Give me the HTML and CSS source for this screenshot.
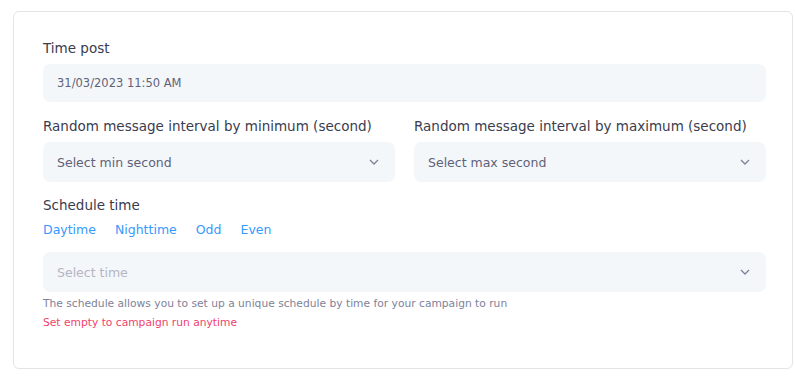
FILE: index.html
```html
<!DOCTYPE html>
<html lang="en">

<head>
    <meta charset="UTF-8">
    <meta name="viewport" content="width=device-width, initial-scale=1.0">
    <title>Campaign schedule</title>
    <link rel="stylesheet" href="styles.css">
</head>

<body>
    <div class="card">
        <div class="field">
            <label for="timePost">Time post</label>
            <input type="text" id="timePost" value="31/03/2023 11:50 AM">
        </div>
        <div class="row">
            <div class="field">
                <label for="minSecond">Random message interval by minimum (second)</label>
                <div class="selectWrap">
                    <select id="minSecond">
                        <option>Select min second</option>
                    </select>
                    <svg class="chevron" viewBox="0 0 10 6" width="10" height="6">
                        <path d="M1 1l4 4 4-4" fill="none" stroke="currentColor" stroke-width="1.3" />
                    </svg>
                </div>
            </div>
            <div class="field">
                <label for="maxSecond">Random message interval by maximum (second)</label>
                <div class="selectWrap">
                    <select id="maxSecond">
                        <option>Select max second</option>
                    </select>
                    <svg class="chevron" viewBox="0 0 10 6" width="10" height="6">
                        <path d="M1 1l4 4 4-4" fill="none" stroke="currentColor" stroke-width="1.3" />
                    </svg>
                </div>
            </div>
        </div>
        <div class="field">
            <label for="scheduleTime">Schedule time</label>
            <div class="presets">
                <a href="#">Daytime</a>
                <a href="#">Nighttime</a>
                <a href="#">Odd</a>
                <a href="#">Even</a>
            </div>
            <div class="selectWrap">
                <select id="scheduleTime" class="empty">
                    <option>Select time</option>
                </select>
                <svg class="chevron" viewBox="0 0 10 6" width="10" height="6">
                    <path d="M1 1l4 4 4-4" fill="none" stroke="currentColor" stroke-width="1.3" />
                </svg>
            </div>
            <div class="hint first">The schedule allows you to set up a unique schedule by time for your campaign to run</div>
            <div class="hint danger">Set empty to campaign run anytime</div>
        </div>
    </div>
</body>

</html>
```

FILE: styles.css
```css
:root {
    --background: #ffffff;
    --border: #e4e4e7;
    --label: #3a3c4e;
    --text: #5e6278;
    --muted: #b5b5c3;
    --hint: #7e8299;
    --input: #f4f7fa;
    --primary: #3699ff;
    --danger: #f1416c;
    --font: "DejaVu Sans", sans-serif;
}

body {
    margin: 0;
    padding: 11px 2px 7px 13px;
    background-color: var(--background);
    font-family: var(--font);
}

.card {
    border: 1px solid var(--border);
    border-radius: 6px;
    padding: 26px 26px 36px 29px;
}

.field {
    display: flex;
    flex-direction: column;
    margin-bottom: 14px;
}

.card>.field:last-child {
    margin-bottom: 0;
}

label {
    font-size: 13.5px;
    font-weight: 500;
    line-height: 20px;
    color: var(--label);
    margin-bottom: 6px;
}

input,
select {
    width: 100%;
    box-sizing: border-box;
    border: none;
    border-radius: 7px;
    background-color: var(--input);
    font-family: var(--font);
    font-size: 12.5px;
    color: var(--text);
    padding: 0 14px;
    outline: none;
}

input {
    height: 38px;
    font-size: 11.5px;
}

select {
    height: 40px;
    appearance: none;
}

select.empty {
    color: var(--muted);
}

.selectWrap {
    position: relative;
}

.chevron {
    position: absolute;
    right: 16px;
    top: 17px;
    color: var(--hint);
    pointer-events: none;
}

.row {
    display: flex;
    gap: 19px;
}

.row>.field {
    flex: 1;
    margin-bottom: 13px;
}

.presets {
    display: flex;
    gap: 19px;
    margin-bottom: 13px;
}

.presets a {
    font-size: 12.5px;
    line-height: 18px;
    color: var(--primary);
    text-decoration: none;
}

.hint {
    font-size: 10.7px;
    line-height: 19px;
    color: var(--hint);
}

.hint.first {
    margin-top: 2px;
}

.hint.danger {
    color: var(--danger);
}
```
